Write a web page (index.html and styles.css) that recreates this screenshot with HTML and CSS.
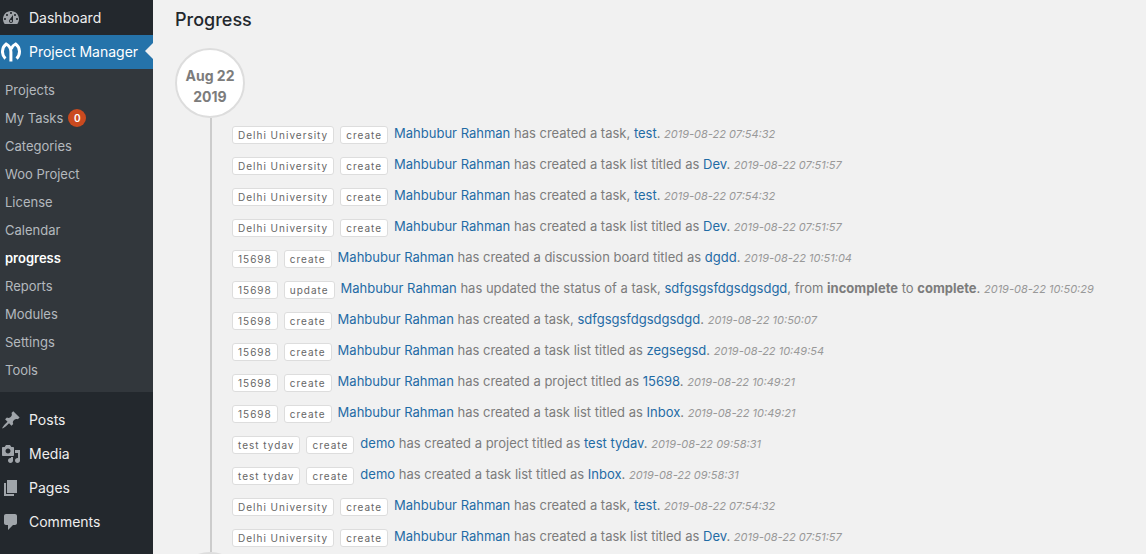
FILE: index.html
```
<!DOCTYPE html>
<html lang="en">
<head>
    <meta charset="UTF-8">
    <meta name="viewport" content="width=device-width, initial-scale=1.0">
    <title>Progress</title>
    <link rel="stylesheet" href="styles.css">
</head>
<body>
    <!-- Admin menu -->
    <nav class="sidebar">
        <a class="menu-item" href="#">
            <svg viewBox="0 0 20 20"><path d="M3.76 16h12.48c1.1-1.37 1.76-3.11 1.76-5 0-4.42-3.58-8-8-8s-8 3.58-8 8c0 1.89.66 3.63 1.76 5zM10 4c.55 0 1 .45 1 1s-.45 1-1 1-1-.45-1-1 .45-1 1-1zM6 6c.55 0 1 .45 1 1s-.45 1-1 1-1-.45-1-1 .45-1 1-1zm8 0c.55 0 1 .45 1 1s-.45 1-1 1-1-.45-1-1 .45-1 1-1zm-5.37 5.55L12 7v6c0 1.1-.9 2-2 2s-2-.9-2-2c0-.57.24-1.08.63-1.45zM4 10c.55 0 1 .45 1 1s-.45 1-1 1-1-.45-1-1 .45-1 1-1zm12 0c.55 0 1 .45 1 1s-.45 1-1 1-1-.45-1-1 .45-1 1-1zm-5 3c0-.55-.45-1-1-1s-1 .45-1 1 .45 1 1 1 1-.45 1-1z"/></svg>
            Dashboard
        </a>
        <a class="menu-item current" href="#">
            <svg class="logo" viewBox="0 0 20 20"><path d="M4.400 16.600C.2 12.500.6 5.500 5.200 2C8 3.500 9.900 6.500 9.900 10V19.400"/><path d="M10.200 7C11 4.800 12.400 3 14.600 2C19.400 5.500 19.800 12.500 15.600 16.600"/></svg>
            Project Manager
        </a>
        <div class="submenu">
            <a href="#">Projects</a>
            <a href="#">My Tasks <span class="count">0</span></a>
            <a href="#">Categories</a>
            <a href="#">Woo Project</a>
            <a href="#">License</a>
            <a href="#">Calendar</a>
            <a class="active" href="#">progress</a>
            <a href="#">Reports</a>
            <a href="#">Modules</a>
            <a href="#">Settings</a>
            <a href="#">Tools</a>
        </div>
        <a class="menu-item" href="#">
            <svg viewBox="0 0 20 20"><path d="M10.440 3.020l1.820-1.820 6.360 6.350-1.830 1.820c-1.050-.68-2.480-.57-3.410.36l-.75.75c-.92.93-1.040 2.350-.35 3.410l-1.830 1.820-2.410-2.410-2.800 2.790c-.42.42-3.380 2.710-3.800 2.290s1.860-3.390 2.280-3.810l2.790-2.790L4.100 9.360l1.830-1.820c1.050.69 2.480.57 3.400-.36l.75-.75c.93-.92 1.050-2.350.36-3.410z"/></svg>
            Posts
        </a>
        <a class="menu-item" href="#">
            <svg viewBox="0 0 20 20"><path d="M13 11V4c0-.55-.45-1-1-1h-1.670L9 1H5L3.670 3H2c-.55 0-1 .45-1 1v7c0 .55.45 1 1 1h10c.55 0 1-.45 1-1zM7 4.500c1.380 0 2.500 1.120 2.500 2.500S8.380 9.500 7 9.500 4.500 8.380 4.500 7 5.620 4.500 7 4.500zM14 6h5v10.500c0 1.380-1.120 2.500-2.500 2.500S14 17.880 14 16.500s1.120-2.500 2.500-2.500c.17 0 .34.02.5.05V9h-3V6zm-4 8.050V13h2v3.500c0 1.380-1.120 2.500-2.500 2.500S7 17.880 7 16.500 8.120 14 9.500 14c.17 0 .34.02.5.05z"/></svg>
            Media
        </a>
        <a class="menu-item" href="#">
            <svg viewBox="0 0 20 20"><path d="M6 15V2h10v13H6zm-1 1h8v2H3V5h2v11z"/></svg>
            Pages
        </a>
        <a class="menu-item" href="#">
            <svg viewBox="0 0 20 20"><path d="M5 2h9c1.100 0 2 .9 2 2v7c0 1.100-.9 2-2 2h-2l-5 5v-5H5c-1.100 0-2-.9-2-2V4c0-1.100.9-2 2-2z"/></svg>
            Comments
        </a>
    </nav>

    <!-- Activity timeline -->
    <main class="content">
        <h2>Progress</h2>

        <div class="date-circle">Aug 22<br>2019</div>
        <ul class="activities">
            <li>
                <span class="tag">Delhi University</span><span class="tag">create</span>
                <p><a href="#">Mahbubur Rahman</a> has created a task, <a href="#">test</a>. <time>2019-08-22 07:54:32</time></p>
            </li>
            <li>
                <span class="tag">Delhi University</span><span class="tag">create</span>
                <p><a href="#">Mahbubur Rahman</a> has created a task list titled as <a href="#">Dev</a>. <time>2019-08-22 07:51:57</time></p>
            </li>
            <li>
                <span class="tag">Delhi University</span><span class="tag">create</span>
                <p><a href="#">Mahbubur Rahman</a> has created a task, <a href="#">test</a>. <time>2019-08-22 07:54:32</time></p>
            </li>
            <li>
                <span class="tag">Delhi University</span><span class="tag">create</span>
                <p><a href="#">Mahbubur Rahman</a> has created a task list titled as <a href="#">Dev</a>. <time>2019-08-22 07:51:57</time></p>
            </li>
            <li>
                <span class="tag">15698</span><span class="tag">create</span>
                <p><a href="#">Mahbubur Rahman</a> has created a discussion board titled as <a href="#">dgdd</a>. <time>2019-08-22 10:51:04</time></p>
            </li>
            <li>
                <span class="tag">15698</span><span class="tag">update</span>
                <p><a href="#">Mahbubur Rahman</a> has updated the status of a task, <a href="#">sdfgsgsfdgsdgsdgd</a>, from <strong>incomplete</strong> to <strong>complete</strong>. <time>2019-08-22 10:50:29</time></p>
            </li>
            <li>
                <span class="tag">15698</span><span class="tag">create</span>
                <p><a href="#">Mahbubur Rahman</a> has created a task, <a href="#">sdfgsgsfdgsdgsdgd</a>. <time>2019-08-22 10:50:07</time></p>
            </li>
            <li>
                <span class="tag">15698</span><span class="tag">create</span>
                <p><a href="#">Mahbubur Rahman</a> has created a task list titled as <a href="#">zegsegsd</a>. <time>2019-08-22 10:49:54</time></p>
            </li>
            <li>
                <span class="tag">15698</span><span class="tag">create</span>
                <p><a href="#">Mahbubur Rahman</a> has created a project titled as <a href="#">15698</a>. <time>2019-08-22 10:49:21</time></p>
            </li>
            <li>
                <span class="tag">15698</span><span class="tag">create</span>
                <p><a href="#">Mahbubur Rahman</a> has created a task list titled as <a href="#">Inbox</a>. <time>2019-08-22 10:49:21</time></p>
            </li>
            <li>
                <span class="tag">test tydav</span><span class="tag">create</span>
                <p><a href="#">demo</a> has created a project titled as <a href="#">test tydav</a>. <time>2019-08-22 09:58:31</time></p>
            </li>
            <li>
                <span class="tag">test tydav</span><span class="tag">create</span>
                <p><a href="#">demo</a> has created a task list titled as <a href="#">Inbox</a>. <time>2019-08-22 09:58:31</time></p>
            </li>
            <li>
                <span class="tag">Delhi University</span><span class="tag">create</span>
                <p><a href="#">Mahbubur Rahman</a> has created a task, <a href="#">test</a>. <time>2019-08-22 07:54:32</time></p>
            </li>
            <li>
                <span class="tag">Delhi University</span><span class="tag">create</span>
                <p><a href="#">Mahbubur Rahman</a> has created a task list titled as <a href="#">Dev</a>. <time>2019-08-22 07:51:57</time></p>
            </li>
        </ul>
        <div class="date-circle"></div>
    </main>
</body>
</html>
```

FILE: styles.css
```
* {
    box-sizing: border-box;
}

body {
    display: flex;
    margin: 0;
    height: 100vh;
    overflow: hidden;
    background-color: #f1f1f1;
    color: #7c7c7c;
    font-family: Inter, "Liberation Sans", sans-serif;
    font-size: 13px;
}

a {
    color: #1f6ba5;
    text-decoration: none;
}

/* Sidebar */
.sidebar {
    flex: 0 0 153px;
    padding-top: 1px;
    background-color: #23282d;
}

.menu-item {
    display: flex;
    align-items: center;
    gap: 8px;
    height: 34px;
    padding: 0 0 2px 1px;
    color: #eee;
    font-size: 14px;
    white-space: nowrap;
}

.menu-item svg {
    width: 20px;
    height: 20px;
    margin-top: 2px;
    fill: #a0a5aa;
}

.menu-item .logo {
    fill: none;
    stroke: #fff;
    stroke-width: 3;
}

.menu-item.current {
    position: relative;
    background-color: #2573aa;
    color: #fff;
}

.menu-item.current::after {
    position: absolute;
    right: 0;
    content: "";
    border: 8px solid transparent;
    border-right-color: #f1f1f1;
}

.submenu {
    margin-bottom: 11px;
    padding: 7px 0 8px;
    background-color: #32373c;
}

.submenu a {
    display: flex;
    align-items: center;
    gap: 5px;
    height: 28px;
    padding-left: 5px;
    color: #b4b9be;
}

.submenu .active {
    color: #fff;
    font-weight: 600;
}

.count {
    width: 18px;
    border-radius: 9px;
    background-color: #ca4a1f;
    color: #fff;
    font-size: 10px;
    font-weight: 600;
    line-height: 18px;
    text-align: center;
}

/* Timeline */
.content {
    flex: 1;
    padding: 8px 22px 0;
}

h2 {
    margin: 0 0 16px;
    color: #23282d;
    font-size: 18px;
    font-weight: 500;
    line-height: 24px;
}

.date-circle {
    width: 70px;
    height: 70px;
    padding-top: 15px;
    border: 2px solid #ddd;
    border-radius: 50%;
    background-color: #fff;
    font-size: 14px;
    font-weight: 700;
    line-height: 21px;
    text-align: center;
}

.activities {
    margin: 0 0 0 35px;
    padding: 0 0 0 20px;
    border-left: 2px solid #ccc;
    list-style: none;
}

.activities li {
    display: flex;
    align-items: center;
    gap: 6px;
    height: 31px;
    white-space: nowrap;
}

.activities p {
    margin: 0 0 2px;
}

.tag {
    margin-top: 2px;
    padding: 0 5px;
    border: 1px solid #ddd;
    border-radius: 3px;
    background-color: #fff;
    color: #666;
    font-size: 10px;
    letter-spacing: 1px;
    line-height: 16px;
}

time {
    color: #999;
    font-size: 11px;
    font-style: italic;
}
```
